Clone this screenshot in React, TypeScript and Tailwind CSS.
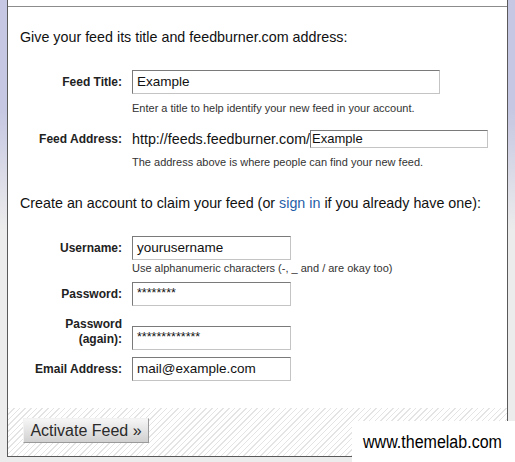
import React from "react";

const inputBorder =
  "border border-t-[#7a7a7a] border-l-[#7a7a7a] border-b-[#c4c4c4] border-r-[#c4c4c4] bg-white";

function Label({ children }: { children: React.ReactNode }) {
  return (
    <div className="w-[114px] pr-0 text-right text-[12px] font-bold leading-[15px] text-[#222]">
      {children}
    </div>
  );
}

export default function App() {
  return (
    <div className="relative h-[462px] w-[515px] overflow-hidden bg-[linear-gradient(to_bottom,#c6c7e2_0px,#c6c7e2_110px,#ececec_230px,#ececec_100%)] font-['Liberation_Sans',Arial,sans-serif]">
      <div className="mx-[7px] flex h-[457px] w-[501px] flex-col border-x border-b border-x-[#5a5a5a] border-b-[#5a5a5a] bg-white">
        <div className="mt-[6px] border-t border-[#8c8c8c]" />

        <div className="ml-[12px] mt-[21px] text-[14.3px] leading-[18px] text-[#111]">
          Give your feed its title and feedburner.com address:
        </div>

        {/* Feed title */}
        <div className="mt-[24px] flex items-center gap-[10px]">
          <Label>Feed Title:</Label>
          <div className={`${inputBorder} flex h-[24px] w-[308px] items-center pl-[4px] text-[13.5px] text-[#111]`}>
            Example
          </div>
        </div>
        <div className="ml-[124px] mt-[8px] text-[11px] leading-[13px] text-[#333]">
          Enter a title to help identify your new feed in your account.
        </div>

        {/* Feed address */}
        <div className="mt-[15px] flex items-center gap-[10px]">
          <Label>Feed Address:</Label>
          <div className="flex items-center">
            <span className="text-[14.3px] leading-[18px] text-[#111]">http://feeds.feedburner.com/</span>
            <div className={`${inputBorder} flex h-[18px] w-[178px] items-center pl-[1px] text-[13px] text-[#111]`}>
              Example
            </div>
          </div>
        </div>
        <div className="ml-[124px] mt-[8px] text-[11px] leading-[13px] text-[#333]">
          The address above is where people can find your new feed.
        </div>

        <div className="ml-[12px] mt-[25px] text-[14.3px] leading-[18px] text-[#111]">
          Create an account to claim your feed (or{" "}
          <a className="text-[#1f5ea8]">sign in</a> if you already have one):
        </div>

        {/* Account fields */}
        <div className="mt-[24px] flex items-center gap-[10px]">
          <Label>Username:</Label>
          <div className={`${inputBorder} flex h-[24px] w-[159px] items-center pl-[4px] text-[13.5px] text-[#111]`}>
            yourusername
          </div>
        </div>
        <div className="ml-[124px] mt-[2px] text-[11px] leading-[13px] text-[#333]">
          Use alphanumeric characters (-, _ and / are okay too)
        </div>

        <div className="mt-[7px] flex items-center gap-[10px]">
          <Label>Password:</Label>
          <div className={`${inputBorder} flex h-[24px] w-[159px] items-start pl-[4px] pt-[3px] text-[12.5px] leading-[14px] text-[#111]`}>
            ********
          </div>
        </div>

        <div className="mt-[11px] flex items-start gap-[10px]">
          <Label>
            Password
            <br />
            (again):
          </Label>
          <div className={`${inputBorder} mt-[9px] flex h-[24px] w-[159px] items-start pl-[4px] pt-[3px] text-[12.5px] leading-[14px] text-[#111]`}>
            *************
          </div>
        </div>

        <div className="mt-[7px] flex items-center gap-[10px]">
          <Label>Email Address:</Label>
          <div className={`${inputBorder} flex h-[24px] w-[159px] items-center pl-[4px] text-[13.5px] text-[#111]`}>
            mail@example.com
          </div>
        </div>

        {/* Submit bar */}
        <div className="mt-auto h-[48px] bg-[repeating-linear-gradient(135deg,#e4e4e4_0px,#e4e4e4_1px,#ffffff_1px,#ffffff_4px)] pl-[15px] pt-[10px]">
          <button className="flex h-[25px] w-[126px] items-center justify-center border border-t-[#f2f2f2] border-l-[#f2f2f2] border-b-[#9a9a9a] border-r-[#9a9a9a] bg-[linear-gradient(to_bottom,#f6f6f6,#d0d0d0)] text-[16px] leading-none text-[#2a2a2a]">
            Activate Feed »
          </button>
        </div>
      </div>

      {/* Site credit */}
      <div className="absolute left-[352px] top-[421px] flex h-[41px] w-[163px] items-center bg-white pl-[11px]">
        <span className="origin-left scale-x-[0.89] text-[18px] leading-none text-black">
          www.themelab.com
        </span>
      </div>
    </div>
  );
}
